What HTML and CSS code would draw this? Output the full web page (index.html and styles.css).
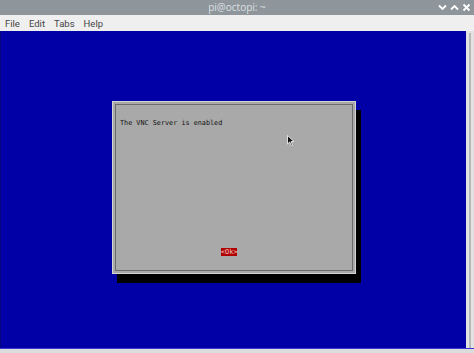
FILE: index.html
```html
<!DOCTYPE html>
<html>
<head>
<meta charset="utf-8">
<link rel="stylesheet" href="styles.css">
</head>
<body>
<div class="window">
  <div class="titlebar">
    <span class="title">pi@octopi: ~</span>
    <div class="controls">
      <svg class="ctl" width="9" height="7" viewBox="0 0 9 7"><path d="M1 1.5 L4.5 5 L8 1.5" fill="none" stroke="#ffffff" stroke-width="1.8"/></svg>
      <svg class="ctl" width="9" height="7" viewBox="0 0 9 7"><path d="M1 5.5 L4.5 2 L8 5.5" fill="none" stroke="#ffffff" stroke-width="1.8"/></svg>
      <svg class="ctl" width="9" height="9" viewBox="0 0 9 9"><path d="M1.5 1.5 L7.5 7.5 M7.5 1.5 L1.5 7.5" fill="none" stroke="#ffffff" stroke-width="1.8"/></svg>
    </div>
  </div>
  <div class="menubar">
    <span>File</span><span>Edit</span><span>Tabs</span><span>Help</span>
  </div>
  <div class="content">
    <div class="terminal">
      <div class="dialog">
        <div class="inner">
          <div class="msg">The VNC Server is enabled</div>
          <div class="btnrow"><span class="okbtn">&lt;Ok&gt;</span></div>
        </div>
      </div>
      <svg class="cursor" width="8" height="12" viewBox="0 0 8 12"><path d="M0.5 0.5 L0.5 9 L2.7 7 L4.2 10.5 L5.5 10 L4 6.6 L7 6.6 Z" fill="#111" stroke="#fff" stroke-width="0.8"/></svg>
    </div>
    <div class="scrollbar"><div class="track"></div></div>
  </div>
  <div class="bottom"></div>
</div>
</body>
</html>
```
FILE: styles.css
```css
html, body { margin: 0; padding: 0; }
body { width: 474px; height: 353px; overflow: hidden; background: #e6e6e6; font-family: "Open Sans", "Noto Sans", sans-serif; }
.window { display: flex; flex-direction: column; width: 474px; height: 353px; }
.titlebar { height: 15px; background: #8e959b; display: flex; align-items: center; justify-content: center; position: relative; }
.title { color: #dde0e3; font-size: 10px; line-height: 15px; }
.controls { position: absolute; right: 3px; top: 0; height: 15px; display: flex; align-items: center; gap: 3px; }
.ctl { display: block; flex: none; }
.menubar { height: 16px; background: #efefef; display: flex; align-items: center; gap: 9px; padding-left: 5px; font-family: Roboto, "Noto Sans", sans-serif; font-size: 9.5px; color: #444; }
.content { flex: 1; display: flex; }
.terminal { flex: 1; background: #0000a6; position: relative; border-left: 1px solid #060680; }
.scrollbar { width: 8px; background: #e2e2e2; display: flex; justify-content: center; }
.track { width: 2px; background: #b8b8b8; margin-top: 2px; }
.bottom { height: 4px; background: #dcdcdc; border-top: 1px solid #3a3ad0; }
.dialog { margin-left: 111px; margin-top: 70px; width: 238px; height: 167px; background: #a9a9a9; border: 1px solid #d4d4d4; box-shadow: 5px 9px 0 0 #000; padding: 2px; }
.inner { height: 100%; box-sizing: border-box; border: 1px solid #6c6c6c; display: flex; flex-direction: column; padding: 14px 0 0 4px; }
.msg { font-family: "DejaVu Sans Mono", monospace; font-size: 6.8px; color: #111; line-height: 8px; }
.btnrow { margin-top: auto; margin-bottom: 11px; padding-left: 101px; }
.okbtn { display: inline-block; background: #b00000; color: #f0c8c8; font-family: "DejaVu Sans Mono", monospace; font-size: 6.8px; line-height: 8px; padding: 0; }
.cursor { position: absolute; left: 286px; top: 104px; }
```
